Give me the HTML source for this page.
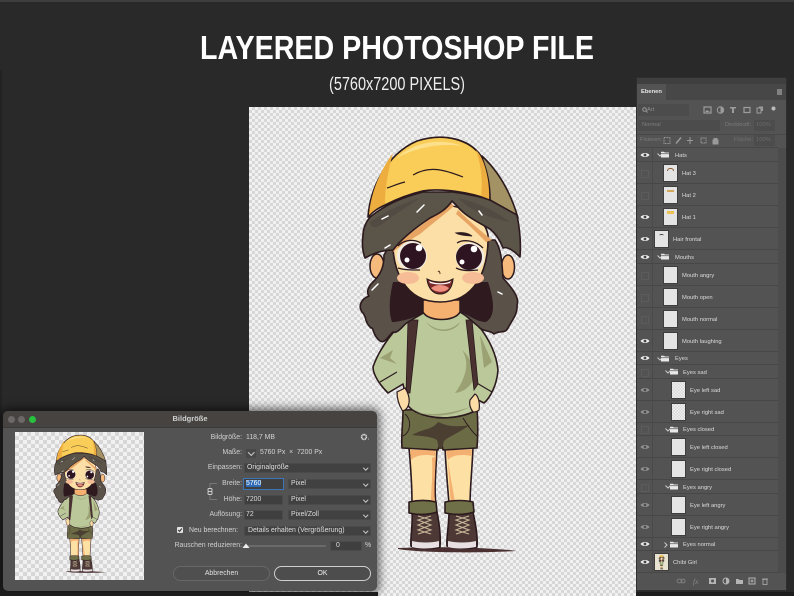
<!DOCTYPE html>
<html><head><meta charset="utf-8"><style>
html,body{margin:0;padding:0}
body{width:794px;height:596px;position:relative;overflow:hidden;background:#292929;font-family:"Liberation Sans",sans-serif}
.abs,.r,.l,.s,.f,.v{position:absolute}
.r{left:637px;width:141px;box-sizing:border-box;border-bottom:1px solid #474747;background:#535353;color:#dcdcdc;font-size:5.8px;white-space:nowrap}
.r span{position:absolute;top:2px;bottom:0;display:flex;align-items:center}
.r .eye{position:absolute;left:3px;top:50%;margin-top:-3px;width:10px;height:6px}
.r .dim{opacity:.4}
.r .h{position:absolute;left:4px;top:50%;margin-top:-3px;width:6px;height:6px;border:1px solid #5c5c5c}
.r .c{position:absolute;left:15px;top:0;bottom:0;width:1px;background:#4a4a4a}
.th{position:absolute;top:3px;width:13px;height:16px;background:#e4e4e4;outline:1px solid #3d3d3d;overflow:hidden}
.fo{position:absolute;top:50%;margin-top:-3.5px;width:14px;height:7px}
#panel{left:637px;top:78px;width:149px;height:512px;background:#535353;box-shadow:0 0 0 1px #2e2e2e}
#dlg{left:3px;top:411px;width:374px;height:180px;background:#535353;border-radius:5px;box-shadow:0 0 9px 3px rgba(0,0,0,.55);overflow:hidden}
.l{font-size:6.9px;color:#cfcfcf;text-align:right;right:552px;white-space:nowrap;line-height:10px}
.v{font-size:6.9px;color:#d4d4d4;white-space:nowrap;line-height:10px}
.s{height:10px;background:#414141;border-radius:1.5px;box-shadow:inset 0 0 0 1px #4a4a4a;font-size:6.9px;color:#dedede;line-height:10px;padding-left:3px;box-sizing:border-box;white-space:nowrap}
.s:after{content:"";position:absolute;right:4px;top:3px;width:2.5px;height:2.5px;border-right:1px solid #ccc;border-bottom:1px solid #ccc;transform:rotate(45deg)}
.f{height:10px;background:#3f3f3f;box-shadow:inset 0 0 0 1px #4b4b4b;font-size:6.9px;color:#dedede;line-height:10px;padding-left:2px;box-sizing:border-box}
.btn{position:absolute;top:566px;height:15px;border-radius:8px;box-sizing:border-box;text-align:center;line-height:14px;font-size:6.9px;color:#e0e0e0}
svg{display:block}
.chk{background-color:#f1f1f1;background-image:conic-gradient(#d7d7d7 25%,#f1f1f1 25% 50%,#d7d7d7 50% 75%,#f1f1f1 75%);background-size:6px 6px}
.chk.big{background-size:8px 8px}
.chk.sm{background-size:3px 3px}
</style></head><body>

<svg width="0" height="0" style="position:absolute">
<defs>
<g id="eyeI"><path d="M.5 3C2.500 .4 7.500 .4 9.500 3 7.500 5.600 2.500 5.600 .5 3Z" fill="#eee"/><circle cx="5" cy="3" r="1.400" fill="#444"/></g>
<g id="folderI"><path d="M6 1.500V.8H9L10 1.500H14V6.500H6Z" fill="#e8e8e8"/><rect x="6" y="2.300" width="8" height=".8" fill="#666"/></g>
<g id="girl">
<path d="M398 548C440 546 500 548 516 551 480 553 420 553 398 549Z" fill="#4a3030"/>
<g stroke="#2c1a1e" stroke-width="1.600" stroke-linejoin="round" stroke-linecap="round">
<path d="M409 448C411 470 412 490 412 504H436C434 490 436 470 437 448Z" fill="#fde0a4"/>
<path d="M445 448C446 470 448 490 449 504H470C470 490 472 470 473 448Z" fill="#fde0a4"/>
</g>
<path d="M410 450H436L435 456C425 454 416 455 411 460ZM432 458C433 475 431 490 431 502H435C434 490 435 470 436 456Z" fill="#f4b070"/>
<path d="M446 450H472L471 456C462 454 452 455 448 460ZM448 460C449 480 450 495 451 502H455C453 490 450 475 448 460Z" fill="#f4b070"/>
<g stroke="#2c1a1e" stroke-width="1.600" stroke-linejoin="round">
<path d="M412 512C413 525 410 540 411 546 414 549 436 549 440 547 441 535 439 522 437 512Z" fill="#4d3835"/>
<path d="M449 512C449 525 446 540 447 546 452 549 472 549 477 547 478 535 475 522 473 512Z" fill="#4d3835"/>
<path d="M409 502C418 500 428 500 436 502L437 512C428 515 418 515 409 513Z" fill="#6f7048"/>
<path d="M445 502C454 500 465 500 473 502L474 512C465 515 455 515 445 513Z" fill="#6f7048"/>
</g>
<path d="M412 541C420 543 432 543 439 541V547C430 549 418 549 412 547Z" fill="#e8dfe2"/>
<path d="M448 541C456 543 468 543 476 541V547C466 549 454 549 448 547Z" fill="#e8dfe2"/>
<path d="M418 516 431 520 418 525 431 530 418 534M431 516 418 520 431 525 418 530 431 534M456 516 469 520 456 525 469 530 456 534M469 516 456 520 469 525 456 530 469 534" stroke="#c6b89a" stroke-width="1.100" fill="none"/>
<path d="M403 410C403 422 401 436 402 448L438 450 441 440 443 450 477 448C478 436 478 422 477 408Z" fill="#6b6c46" stroke="#2c1a1e" stroke-width="1.600" stroke-linejoin="round"/>
<path d="M412 435C425 428 432 430 438 422 445 425 452 428 470 425 455 435 448 437 444 441L442 449H439L437 440C430 436 420 436 412 435Z" fill="#4a3f30"/>
<path d="M405 414C412 420 411 432 403 436M463 418C468 426 472 432 477 436" fill="none" stroke="#2c1a1e" stroke-width="1"/>
<path d="M420 312C412 316 404 318 400 325 390 335 378 352 373 367 373 375 380 385 388 393L403 384 406 398C405 402 408 408 416 412 435 421 460 419 477 410L478 400 484 403C490 398 497 385 498 370 496 350 486 335 478 325 472 318 465 315 460 312Z" fill="#bac89a" stroke="#2c1a1e" stroke-width="1.600" stroke-linejoin="round"/>
<path d="M462 350C470 362 466 378 455 393 465 392 472 385 476 375 474 365 468 355 462 350ZM426 322C437 332 450 332 460 322 456 332 436 336 426 322ZM380 358 393 350 390 358 397 364ZM480 335 492 362 484 368ZM416 412C430 416 450 414 470 407 455 415 435 419 416 412Z" fill="#9ba173"/>
<path d="M380 382 397 372M475 382 492 392" stroke="#2c1a1e" stroke-width="1.200"/>
<path d="M408 320H418L410 393H406ZM466 320H472L478 384 474 390Z" fill="#4a3230" stroke="#2c1a1e" stroke-width=".8"/>
<path d="M397 392 405 388C409 394 411 402 407 408 405 411 403 411 402 410 399 405 397 400 397 392ZM470 400 475 394C479 396 480 405 479 410 477 412 474 412 473 412 470 408 469 404 470 400Z" fill="#fcdca6" stroke="#2c1a1e" stroke-width="1.200"/>
<ellipse cx="377" cy="266" rx="7" ry="12" fill="#f6bb7c" stroke="#2c1a1e" stroke-width="1.500"/>
<ellipse cx="508" cy="267" rx="6.500" ry="12" fill="#f6bb7c" stroke="#2c1a1e" stroke-width="1.500"/>
<path d="M393 240 384 255C384 265 382 272 375 280 368 286 366 292 369 296 361 299 358 306 362 312 367 316 364 322 371 328 374 327 372 335 380 341 385 344 388 336 393 332 398 334 403 325 408 322L425 312H460C468 316 472 322 478 326 482 332 490 330 494 334 500 330 505 334 508 328 512 320 518 314 517 305 520 298 512 288 503 278 502 265 502 250 495 240Z" fill="#5a5249" stroke="#2c1a1e" stroke-width="1.600" stroke-linejoin="round"/>
<path d="M393 282C390 295 388 310 392 322 400 322 415 318 425 312H460C468 314 476 322 486 322 496 316 494 300 488 282Z" fill="#2e1a1f"/>
<path d="M423 300V312C428 322 455 322 460 312V300Z" fill="#f6b070" stroke="#2c1a1e" stroke-width="1.500"/>
<path d="M393 235C391 270 405 302 440 302 475 302 489 270 488 235 480 195 400 195 393 235Z" fill="#fbdfa6" stroke="#2c1a1e" stroke-width="1.600"/>
<path d="M393 248C405 235 420 228 430 218 436 212 445 206 450 202L454 206C445 214 432 224 420 234 410 240 400 246 393 252Z" fill="#e8a462"/>
<path d="M458 210C470 222 482 232 492 240L486 242C476 232 466 222 456 214Z" fill="#e8a462"/>
<ellipse cx="408" cy="278" rx="11" ry="6" fill="#f6bc96"/><ellipse cx="473" cy="278" rx="11" ry="6" fill="#f6bc96"/>
<ellipse cx="412" cy="256" rx="15" ry="15" fill="#f2ebe0"/><circle cx="413" cy="256" r="13" fill="#2e1420"/>
<circle cx="419" cy="248" r="3.300" fill="#fff"/><circle cx="407" cy="260" r="2.500" fill="#fff"/>
<ellipse cx="470" cy="257" rx="14.500" ry="14.500" fill="#f2ebe0"/><circle cx="469" cy="257" r="13" fill="#2e1420"/>
<circle cx="474" cy="249" r="3.300" fill="#fff"/><circle cx="462" cy="262" r="2.500" fill="#fff"/>
<path d="M398 268C404 270 412 270 420 270M456 268C462 271 470 271 478 270M398 246C402 241 412 238 421 243M457 243C463 239 475 240 483 248" stroke="#2c1a1e" stroke-width="1.300" fill="none"/>
<path d="M456 233C462 232 468 233 472 236 466 235 461 236 456 233Z" fill="#2c1a1e" stroke="#2c1a1e"/>
<path d="M438 272C439 270 440 272 440 274" stroke="#5a3020" fill="none"/>
<path d="M427 279C435 283 446 283 453 279 452 290 446 294 440 294 433 294 428 288 427 279Z" fill="#7a2a28" stroke="#2c1a1e" stroke-width="1.100"/>
<path d="M431 288C436 284 444 284 449 288 446 293 435 293 431 288Z" fill="#ef8f80"/>
<path d="M429 281C436 284 445 284 451 281L450 283C444 285 436 285 430 283Z" fill="#fff"/>
<path d="M482 156C497 170 510 190 518 218L490 202Z" fill="#a39263" stroke="#2c1a1e" stroke-width="1.600" stroke-linejoin="round"/>
<path d="M363 235C363 228 366 222 370 217 385 205 400 198 423 192L453 192C465 194 480 196 490 200L517 215C520 230 521 245 520 257 515 252 508 246 503 248 500 240 496 234 490 229 478 222 465 216 457 206L452 201C446 210 438 214 430 218 415 228 402 238 393 250 382 250 372 254 365 258 362 250 362 242 363 235Z" fill="#5b5449" stroke="#2c1a1e" stroke-width="1.600" stroke-linejoin="round"/>
<path d="M370 222C385 212 400 204 420 198 412 204 398 212 385 222 377 228 372 230 370 222ZM458 198C475 202 495 210 510 222 490 218 472 212 458 198Z" fill="#524b43"/>
<path d="M382 219 388 216M417 212 424 205M479 211 482 215M385 248 390 245M498 292 502 294M372 290 378 284" stroke="#fff" stroke-width="1.500" stroke-linecap="round"/>
<path d="M368 217C370 190 385 155 417 141 445 132 470 140 481 156 487 170 490 185 490 200 470 192 440 188 423 191 410 194 395 200 385 205 378 208 372 212 368 217Z" fill="#f9cd58" stroke="#2c1a1e" stroke-width="1.700" stroke-linejoin="round"/>
<path d="M369 215C371 190 382 168 393 153 388 170 385 190 385 204 378 207 373 211 369 215ZM476 150C486 160 490 185 489 199L481 196C483 180 481 165 476 150Z" fill="#eeae3f"/>
<path d="M397 158C412 143 440 137 462 146 440 143 417 147 397 158Z" fill="#fde08c"/>
<path d="M413 175C430 165 445 170 463 177M387 188C393 186 400 183 405 182" stroke="#2c1a1e" stroke-width="1.200" fill="none"/>
</g>
</defs>
</svg>

<div class="abs" style="left:0;top:0;width:794px;height:2px;background:#3e3e3e"></div>
<div class="abs" style="left:0;top:70px;width:2px;height:526px;background:#222"></div>
<svg class="abs" style="left:0;top:0" width="794" height="100">
<text x="200" y="59" font-family="'Liberation Sans Narrow','Liberation Sans',sans-serif" font-weight="700" font-size="33.500" fill="#fff" textLength="394" lengthAdjust="spacingAndGlyphs">LAYERED PHOTOSHOP FILE</text>
<text x="329" y="90" font-family="'Liberation Sans Narrow','Liberation Sans',sans-serif" font-size="18" fill="#eeeeee" textLength="136" lengthAdjust="spacingAndGlyphs">(5760x7200 PIXELS)</text>
</svg>

<div class="abs chk" style="left:249px;top:107px;width:387px;height:489px"></div>
<svg class="abs" style="left:0;top:0" width="794" height="596"><use href="#girl"/></svg>

<!-- Dialog -->
<div class="abs" id="dlg">
<div class="abs" style="left:0;top:0;width:374px;height:16px;background:#474340;border-bottom:1px solid #3a3a3a"></div>
<div class="abs" style="left:5px;top:4.500px;width:7px;height:7px;border-radius:50%;background:#6b6867"></div>
<div class="abs" style="left:15px;top:4.500px;width:7px;height:7px;border-radius:50%;background:#6b6867"></div>
<div class="abs" style="left:26px;top:4.500px;width:7px;height:7px;border-radius:50%;background:#27c13f"></div>
<div class="abs" style="left:0;width:374px;top:2px;text-align:center;font-size:7.500px;font-weight:700;color:#d0d0d0;line-height:12px">Bildgröße</div>
</div>
<div class="abs chk big" style="left:15px;top:432px;width:129px;height:148px;overflow:hidden">
<svg width="129" height="148"><g transform="translate(-81 -42.500) scale(.332)"><use href="#girl"/></g></svg>
</div>
<div class="l" style="top:433px">Bildgröße:</div><div class="v" style="left:246px;top:433px">118,7 MB</div>
<svg class="abs" style="left:360px;top:433px" width="10" height="8"><circle cx="4" cy="4" r="2.400" fill="none" stroke="#ddd" stroke-width="1.600" stroke-dasharray="1.200 .4"/><circle cx="8.500" cy="6" r=".5" fill="#ccc"/></svg>
<div class="l" style="top:448px">Maße:</div>
<div class="abs" style="left:246px;top:449px;width:10px;height:9px;background:#484848"></div>
<div class="abs" style="left:249px;top:450px;width:3.500px;height:3.500px;border-right:1px solid #ccc;border-bottom:1px solid #ccc;transform:rotate(45deg)"></div>
<div class="v" style="left:260px;top:448px">5760 Px &nbsp;×&nbsp; 7200 Px</div>
<div class="l" style="top:463px">Einpassen:</div><div class="s" style="left:244px;top:463px;width:127px">Originalgröße</div>
<div class="l" style="top:479px">Breite:</div>
<div class="f" style="left:244px;top:479px;width:39px;box-shadow:0 0 0 1px #3d75b8"><span style="background:#2f6bb5;color:#fff">5760</span></div>
<div class="s" style="left:288px;top:479px;width:83px">Pixel</div>
<div class="l" style="top:495px">Höhe:</div><div class="f" style="left:244px;top:495px;width:39px">7200</div>
<div class="s" style="left:288px;top:495px;width:83px">Pixel</div>
<div class="l" style="top:510px">Auflösung:</div><div class="f" style="left:244px;top:510px;width:39px">72</div>
<div class="s" style="left:288px;top:510px;width:83px">Pixel/Zoll</div>
<svg class="abs" style="left:204px;top:482px" width="14" height="20"><path d="M13 1.500H6V6M13 17.500H6V13" stroke="#777" fill="none"/><rect x="4" y="6.500" width="4" height="3" rx="1" fill="none" stroke="#ccc"/><rect x="4" y="9.500" width="4" height="3" rx="1" fill="none" stroke="#ccc"/></svg>
<div class="abs" style="left:177px;top:527px;width:6px;height:6px;background:#e4e4e4;border-radius:1px"></div>
<svg class="abs" style="left:177px;top:527px" width="6" height="6"><path d="M1.200 3 2.600 4.400 4.800 1.500" stroke="#333" stroke-width="1.100" fill="none"/></svg>
<div class="v" style="left:189px;top:526px">Neu berechnen:</div>
<div class="s" style="left:244px;top:526px;width:127px;padding-left:4px">Details erhalten (Vergrößerung)</div>
<div class="l" style="top:541px">Rauschen reduzieren:</div>
<div class="abs" style="left:245px;top:545px;width:81px;height:2px;background:#6a6a6a;border-radius:1px"></div>
<svg class="abs" style="left:241.500px;top:543px" width="8" height="6"><path d="M4 .5 7.500 5H.5Z" fill="#eee"/></svg>
<div class="f" style="left:330px;top:541px;width:32px;padding-left:6px">0</div>
<div class="v" style="left:365px;top:541px">%</div>
<div class="btn" style="left:173px;width:97px;border:1px solid #676767;background:#4f4f4f">Abbrechen</div>
<div class="btn" style="left:274px;width:97px;border:1px solid #cfcfcf;background:#4d4d4d;color:#f0f0f0">OK</div>

<!-- Panel -->
<div class="abs" id="panel"></div>
<div class="abs" style="left:637px;top:78px;width:149px;height:6px;background:#3f3f3f"></div>
<div class="abs" style="left:637px;top:84px;width:149px;height:16px;background:#474747"></div>
<div class="abs" style="left:637px;top:84px;width:29px;height:16px;background:#535353;color:#e6e6e6;font-size:5.800px;font-weight:700;line-height:16px;text-indent:4px">Ebenen</div>
<svg class="abs" style="left:776px;top:89px" width="7" height="6"><path d="M1 1H6M1 3H6M1 5H6" stroke="#bbb"/></svg>
<div class="abs" style="left:638px;top:104px;width:51px;height:12px;background:#4c4c4c;color:#8e8e8e;font-size:5.800px;line-height:12px;text-indent:9px">Art</div>
<svg class="abs" style="left:642px;top:107px" width="6" height="6"><circle cx="2.500" cy="2.500" r="1.800" fill="none" stroke="#999"/><path d="M4 4 5.500 5.500" stroke="#999"/></svg>
<svg class="abs" style="left:703px;top:105px" width="76" height="10" fill="#9c9c9c">
<path d="M1 2H8V8H1Z" fill="none" stroke="#9c9c9c" stroke-width="1.200"/><path d="M2 7 4 5 7 7Z"/>
<circle cx="17.500" cy="5" r="3.200" fill="none" stroke="#9c9c9c"/><path d="M17.500 2A3 3 0 0 1 17.500 8Z"/>
<path d="M27 2H33V3.500H31V8H29V3.500H27Z"/>
<path d="M41 2.500H47V7.500H41Z" fill="none" stroke="#9c9c9c" stroke-width="1.200"/>
<path d="M54 3H58V8H54Z" fill="none" stroke="#9c9c9c"/><path d="M56 1.500H60V6H58V3H56Z"/>
<circle cx="70.500" cy="3.500" r="2" fill="#bbb"/>
</svg>
<div class="abs" style="left:638px;top:120px;width:82px;height:11px;background:#4c4c4c;color:#7d7d7d;font-size:5.800px;line-height:11px;text-indent:4px">Normal</div>
<div class="abs" style="left:725px;top:120px;color:#7a7a7a;font-size:5.800px;line-height:11px">Deckkraft:</div>
<div class="abs" style="left:754px;top:120px;width:21px;height:11px;background:#4c4c4c;color:#6b6b6b;font-size:5.800px;line-height:11px;text-indent:2px">100%</div>
<div class="abs" style="left:637px;top:134px;width:149px;height:1px;background:#484848"></div>
<div class="abs" style="left:640px;top:135px;color:#7a7a7a;font-size:5.800px;line-height:11px">Fixieren:</div>
<svg class="abs" style="left:663px;top:136px" width="60" height="9" fill="none" stroke="#9a9a9a">
<rect x="1" y="1.500" width="6" height="6" stroke-dasharray="1 .6"/><path d="M13 7.500 18 1.500" stroke-width="1.500"/><path d="M27 1V8M24 4.500H30"/><path d="M38 2H43V7H38Z" stroke-dasharray="1.500 .7"/><path d="M50 4H55V8H50ZM51 4V2.500H54V4" fill="#9a9a9a"/>
</svg>
<div class="abs" style="left:734px;top:135px;color:#6f6f6f;font-size:5.800px;line-height:11px">Fläche:</div>
<div class="abs" style="left:754px;top:135px;width:21px;height:11px;background:#4c4c4c;color:#6b6b6b;font-size:5.800px;line-height:11px;text-indent:2px">100%</div>
<div class="abs" style="left:778px;top:148px;width:8px;height:425px;background:#4c4c4c"></div>
<div class="abs" style="left:637px;top:147px;width:141px;height:1px;background:#474747"></div>

<div class="r" style="top:148px;height:14px"><svg class="eye"><use href="#eyeI"/></svg><i class="c"></i><svg class="abs" style="left:20px;top:5px" width="6" height="4"><path d="M.5 .5 3 3 5.500 .5" stroke="#ccc" fill="none"/></svg><svg class="fo" style="left:18px"><use href="#folderI"/></svg><span style="left:38px">Hats</span></div>
<div class="r" style="top:162px;height:22px"><i class="h"></i><i class="c"></i><div class="th" style="left:27px"><div class="abs" style="left:3px;top:3px;width:7px;height:3px;border:1px solid #8a5a2c;border-bottom:0;border-radius:4px 4px 0 0;box-sizing:border-box"></div></div><span style="left:45px">Hat 3</span></div>
<div class="r" style="top:184px;height:22px"><i class="h"></i><i class="c"></i><div class="th" style="left:27px"><div class="abs" style="left:3px;top:3px;width:7px;height:2px;background:#d4a75a"></div></div><span style="left:45px">Hat 2</span></div>
<div class="r" style="top:206px;height:22px"><svg class="eye"><use href="#eyeI"/></svg><i class="c"></i><div class="th" style="left:27px"><div class="abs" style="left:3px;top:2px;width:7px;height:3px;background:#ecc352"></div></div><span style="left:45px">Hat 1</span></div>
<div class="r" style="top:228px;height:22px"><svg class="eye"><use href="#eyeI"/></svg><i class="c"></i><div class="th" style="left:18px;background:#e4e4e4"><div class="abs" style="left:4px;top:3px;width:5px;height:2px;border-top:1px solid #444;border-radius:50%"></div></div><span style="left:36px">Hair frontal</span></div>
<div class="r" style="top:250px;height:14px"><svg class="eye"><use href="#eyeI"/></svg><i class="c"></i><svg class="abs" style="left:20px;top:5px" width="6" height="4"><path d="M.5 .5 3 3 5.500 .5" stroke="#ccc" fill="none"/></svg><svg class="fo" style="left:18px"><use href="#folderI"/></svg><span style="left:38px">Mouths</span></div>
<div class="r" style="top:264px;height:22px"><i class="h"></i><i class="c"></i><div class="th" style="left:27px"></div><span style="left:45px">Mouth angry</span></div>
<div class="r" style="top:286px;height:22px"><i class="h"></i><i class="c"></i><div class="th" style="left:27px"></div><span style="left:45px">Mouth open</span></div>
<div class="r" style="top:308px;height:22px"><i class="h"></i><i class="c"></i><div class="th" style="left:27px"></div><span style="left:45px">Mouth normal</span></div>
<div class="r" style="top:330px;height:22px"><svg class="eye"><use href="#eyeI"/></svg><i class="c"></i><div class="th" style="left:27px"></div><span style="left:45px">Mouth laughing</span></div>
<div class="r" style="top:352px;height:13px"><svg class="eye"><use href="#eyeI"/></svg><i class="c"></i><svg class="abs" style="left:20px;top:5px" width="6" height="4"><path d="M.5 .5 3 3 5.500 .5" stroke="#ccc" fill="none"/></svg><svg class="fo" style="left:18px"><use href="#folderI"/></svg><span style="left:38px">Eyes</span></div>
<div class="r" style="top:365px;height:14px"><i class="h"></i><i class="c"></i><svg class="abs" style="left:28px;top:5px" width="6" height="4"><path d="M.5 .5 3 3 5.500 .5" stroke="#ccc" fill="none"/></svg><svg class="fo" style="left:27px"><use href="#folderI"/></svg><span style="left:46px">Eyes sad</span></div>
<div class="r" style="top:379px;height:22px"><svg class="eye dim"><use href="#eyeI"/></svg><i class="c"></i><div class="th chk sm" style="left:35px"></div><span style="left:53px">Eye left sad</span></div>
<div class="r" style="top:401px;height:22px"><svg class="eye dim"><use href="#eyeI"/></svg><i class="c"></i><div class="th chk sm" style="left:35px"></div><span style="left:53px">Eye right sad</span></div>
<div class="r" style="top:423px;height:13px"><i class="h"></i><i class="c"></i><svg class="abs" style="left:28px;top:5px" width="6" height="4"><path d="M.5 .5 3 3 5.500 .5" stroke="#ccc" fill="none"/></svg><svg class="fo" style="left:27px"><use href="#folderI"/></svg><span style="left:46px">Eyes closed</span></div>
<div class="r" style="top:436px;height:22px"><svg class="eye dim"><use href="#eyeI"/></svg><i class="c"></i><div class="th" style="left:35px"></div><span style="left:53px">Eye left closed</span></div>
<div class="r" style="top:458px;height:22px"><svg class="eye dim"><use href="#eyeI"/></svg><i class="c"></i><div class="th" style="left:35px"></div><span style="left:53px">Eye right closed</span></div>
<div class="r" style="top:480px;height:14px"><i class="h"></i><i class="c"></i><svg class="abs" style="left:28px;top:5px" width="6" height="4"><path d="M.5 .5 3 3 5.500 .5" stroke="#ccc" fill="none"/></svg><svg class="fo" style="left:27px"><use href="#folderI"/></svg><span style="left:46px">Eyes angry</span></div>
<div class="r" style="top:494px;height:22px"><svg class="eye dim"><use href="#eyeI"/></svg><i class="c"></i><div class="th" style="left:35px"></div><span style="left:53px">Eye left angry</span></div>
<div class="r" style="top:516px;height:22px"><svg class="eye dim"><use href="#eyeI"/></svg><i class="c"></i><div class="th" style="left:35px"></div><span style="left:53px">Eye right angry</span></div>
<div class="r" style="top:538px;height:13px"><svg class="eye"><use href="#eyeI"/></svg><i class="c"></i><svg class="abs" style="left:27px;top:4px" width="4" height="6"><path d="M.5 .5 3 3 .5 5.500" stroke="#ccc" fill="none"/></svg><svg class="fo" style="left:27px"><use href="#folderI"/></svg><span style="left:46px">Eyes normal</span></div>
<div class="r" style="top:551px;height:22px"><svg class="eye"><use href="#eyeI"/></svg><i class="c"></i><div class="th" style="left:18px;background:#e8e2d0"><svg width="13" height="16"><g transform="translate(-9 -4) scale(.0353)"><use href="#girl"/></g></svg></div><span style="left:36px">Chibi Girl</span></div>

<svg class="abs" style="left:676px;top:576px" width="100" height="10" fill="#b5b5b5">
<path d="M1 5C1 2.500 6 2.500 6 5M1 5C1 7.500 6 7.500 6 5M5 5C5 2.500 9 2.500 9 5 9 7.500 5 7.500 5 5" stroke="#7c7c7c" fill="none"/>
<text x="17" y="8" font-size="7.500" font-style="italic" font-family="Liberation Serif" fill="#8a8a8a">fx</text>
<path d="M33 2H40V8H33Z"/><circle cx="36.500" cy="5" r="1.500" fill="#535353"/>
<circle cx="50" cy="5" r="3" fill="none" stroke="#b5b5b5"/><path d="M50 2A3 3 0 0 1 50 8Z"/>
<path d="M60 3H62.500L63.500 4H67V8H60Z"/>
<path d="M73 2H79V8H73Z" fill="none" stroke="#b5b5b5"/><path d="M76 3.500V6.500M74.500 5H77.500" stroke="#b5b5b5"/>
<path d="M86 3H92M87 3.500H91V8.500H87Z" fill="none" stroke="#9c9c9c"/>
</svg>
<div class="abs" style="left:0;top:592px;width:378px;height:4px;background:#1c1c1c"></div>
<div class="abs" style="left:636px;top:592px;width:158px;height:4px;background:#1c1c1c"></div>
</body></html>
